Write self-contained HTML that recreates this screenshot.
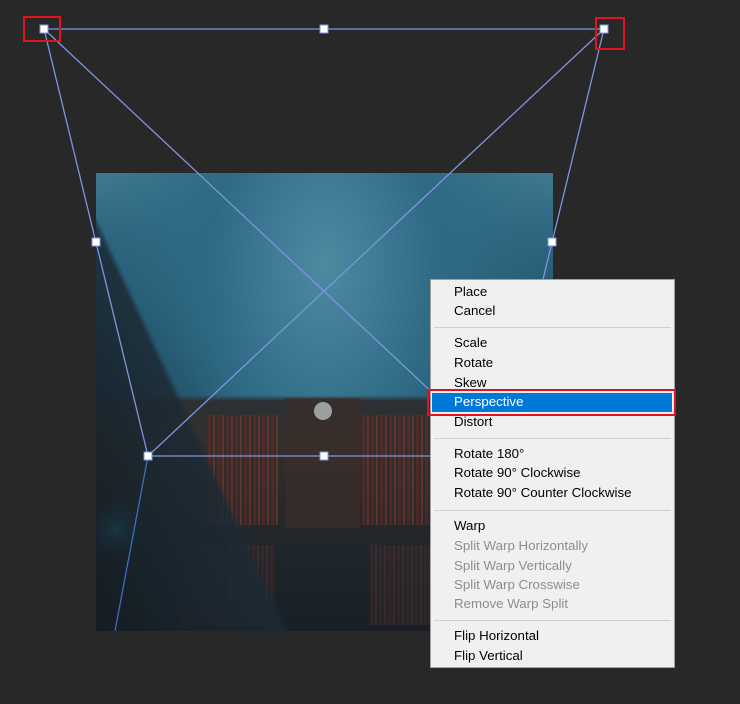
<!DOCTYPE html>
<html><head><style>
body{margin:0;width:740px;height:704px;background:#282828;position:relative;overflow:hidden;font-family:"Liberation Sans",sans-serif}
.img{position:absolute;left:96px;top:173px;width:457px;height:458px;
background:
radial-gradient(circle at 20px 356px,#3ab8d8 0,#1a7090 8px,rgba(0,0,0,0) 28px),
linear-gradient(180deg,rgba(0,0,0,0) 0,rgba(0,0,0,0) 222px,#2c3034 228px,#33302f 260px,#2a2828 330px,#1e262c 380px,#182026 458px),
radial-gradient(ellipse at 50% 20%,#4d8aa2 0,#2f6a84 35%,rgba(0,0,0,0) 70%),
linear-gradient(180deg,#3f7890 0,#2f6680 60px,#265a72 120px,#1d4860 180px,#173a4c 225px);}
.books{position:absolute;background:repeating-linear-gradient(90deg,#6a2a26 0,#6a2a26 3px,#3a2a26 3px,#3a2a26 5px,#8a3a30 5px,#8a3a30 7px,#2a2a2c 7px,#2a2a2c 9px);opacity:.55}
.lside{position:absolute;left:96px;top:173px;width:457px;height:458px;
background:linear-gradient(65deg,#141c22 0,#1c2a34 28%,rgba(0,0,0,0) 29%);opacity:.85}
.rside{position:absolute;left:96px;top:173px;width:457px;height:458px;
background:linear-gradient(-65deg,#141c22 0,#1c2a34 12%,rgba(0,0,0,0) 13%);opacity:.8}
.menu{position:absolute;left:430px;top:279px;width:243px;height:387px;background:#f0f0f0;border:1px solid #a0a0a0;font-size:13.3px;color:#000}
.it{position:absolute;left:23px;line-height:18px}
.dis{color:#8d8d8d}
.sep{position:absolute;left:3px;right:3px;height:1px;background:#d0d0d0}
.hl{position:absolute;left:1px;top:113px;width:240px;height:19px;background:#0078d7}
.red{position:absolute;border:2px solid #e0141e}
</style></head><body>
<div class="img"></div>
<div class="books" style="left:208px;top:415px;width:70px;height:110px"></div>
<div class="books" style="left:362px;top:415px;width:68px;height:110px"></div>
<div class="books" style="left:180px;top:545px;width:95px;height:80px;opacity:.3"></div>
<div class="books" style="left:370px;top:545px;width:60px;height:80px;opacity:.3"></div>
<div style="position:absolute;left:285px;top:398px;width:75px;height:130px;background:#3a2e2a;opacity:.7"></div>
<div style="position:absolute;left:314px;top:402px;width:18px;height:18px;border-radius:50%;background:#c8d0d0;opacity:.7"></div>
<div class="lside"></div><div class="rside"></div>
<svg width="740" height="704" style="position:absolute;left:0;top:0">
<g stroke="#7f94e0" stroke-width="1.3" fill="none">
<line x1="44" y1="29" x2="604" y2="29"/>
<line x1="44" y1="29" x2="148" y2="456"/>
<line x1="604" y1="29" x2="500" y2="456"/>
<line x1="148" y1="456" x2="500" y2="456"/>
<line x1="44" y1="29" x2="500" y2="456"/>
<line x1="604" y1="29" x2="148" y2="456"/>
<line x1="148" y1="456" x2="115" y2="631" stroke="#3a6ec0"/>
</g>
<g fill="#fff" stroke="#7f94e0" stroke-width="1">
<rect x="40" y="25" width="8" height="8"/><rect x="320" y="25" width="8" height="8"/><rect x="600" y="25" width="8" height="8"/>
<rect x="92" y="238" width="8" height="8"/><rect x="548" y="238" width="8" height="8"/>
<rect x="144" y="452" width="8" height="8"/><rect x="320" y="452" width="8" height="8"/>
</g></svg>
<div class="red" style="left:23px;top:16px;width:34px;height:22px"></div>
<div class="red" style="left:595px;top:17px;width:26px;height:29px"></div>
<div class="menu">
<div class="hl"></div>
<div class="it" style="top:3px">Place</div>
<div class="it" style="top:22px">Cancel</div>
<div class="sep" style="top:47px"></div>
<div class="it" style="top:54px">Scale</div>
<div class="it" style="top:74px">Rotate</div>
<div class="it" style="top:94px">Skew</div>
<div class="it" style="top:113px;color:#fff">Perspective</div>
<div class="it" style="top:133px">Distort</div>
<div class="sep" style="top:158px"></div>
<div class="it" style="top:165px">Rotate 180°</div>
<div class="it" style="top:184px">Rotate 90° Clockwise</div>
<div class="it" style="top:204px">Rotate 90° Counter Clockwise</div>
<div class="sep" style="top:230px"></div>
<div class="it" style="top:237px">Warp</div>
<div class="it dis" style="top:257px">Split Warp Horizontally</div>
<div class="it dis" style="top:277px">Split Warp Vertically</div>
<div class="it dis" style="top:296px">Split Warp Crosswise</div>
<div class="it dis" style="top:315px">Remove Warp Split</div>
<div class="sep" style="top:340px"></div>
<div class="it" style="top:347px">Flip Horizontal</div>
<div class="it" style="top:367px">Flip Vertical</div>
</div>
<div class="red" style="left:427px;top:389px;width:245px;height:23px"></div>
</body></html>
